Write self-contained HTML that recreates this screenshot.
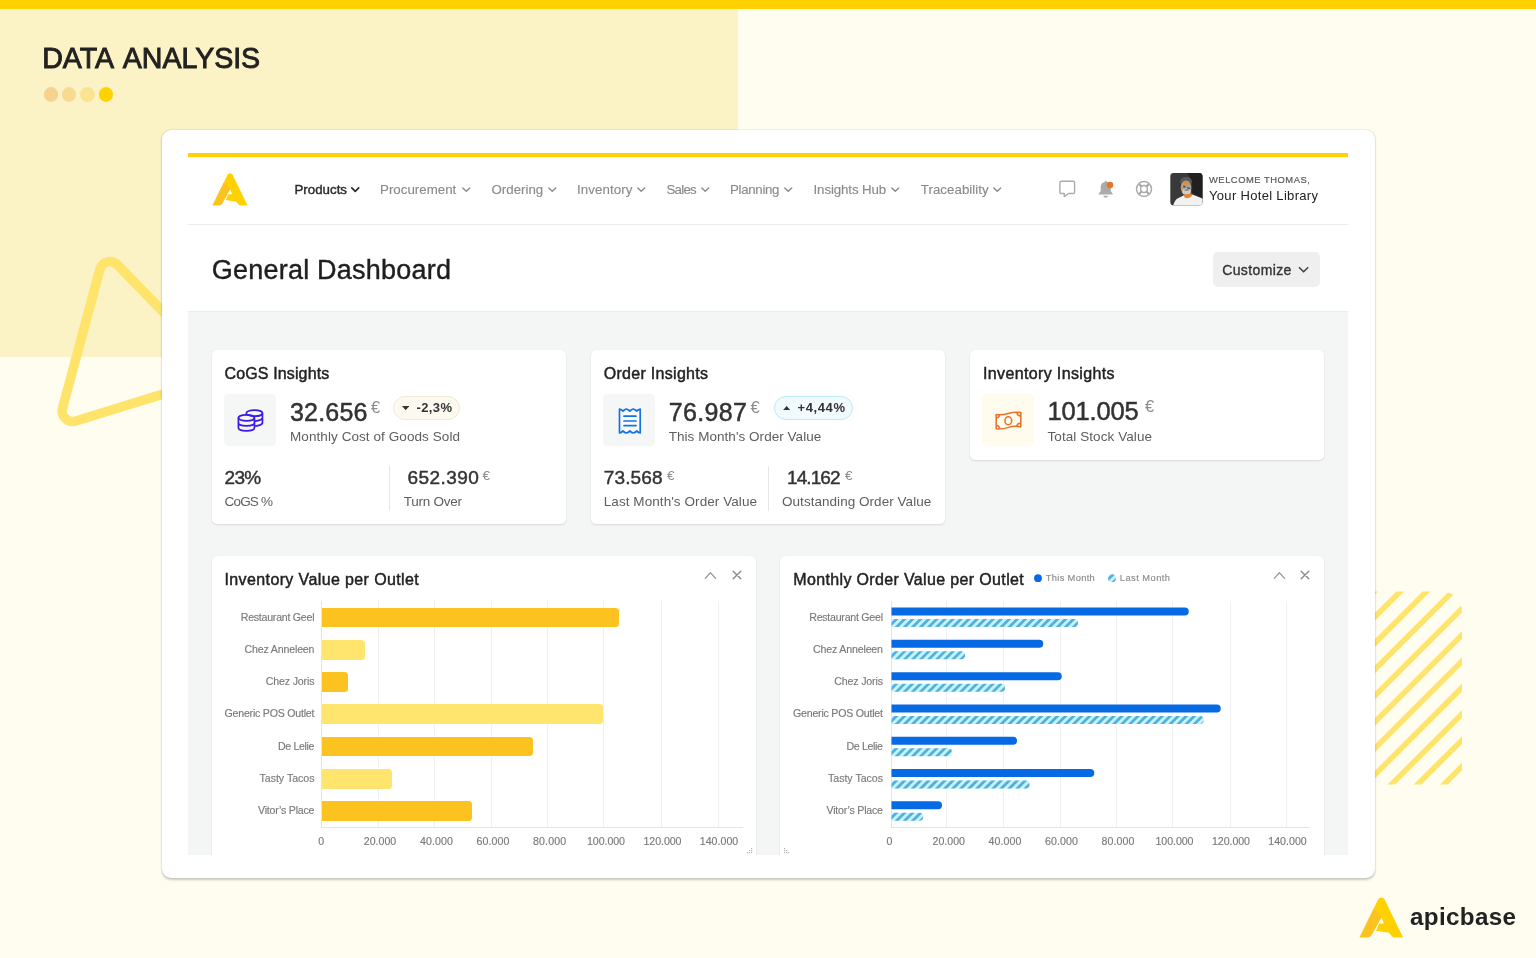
<!DOCTYPE html><html lang="en"><head><meta charset="utf-8"><title>Data Analysis – General Dashboard</title><style>
*{box-sizing:border-box;margin:0;padding:0}
html,body{width:1536px;height:958px;overflow:hidden}
h1,h2,h3{font-weight:inherit;font-size:inherit}
body{position:relative;background:#FFFDF0;font-family:"Liberation Sans",sans-serif;color:#333}
#root{position:absolute;left:0;top:0;width:1536px;height:958px;will-change:transform}
.abs,.t,svg.ic{position:absolute}
.t{white-space:nowrap;line-height:1;display:block}
.topbar{left:0;top:0;width:1536px;height:9px;background:#FFD100}
.leftpanel{left:0;top:9px;width:738px;height:348px;background:#FBF2C6}
.dot{width:14.4px;height:15px;border-radius:50%;top:86.8px}
.shell{left:162px;top:129.5px;width:1212.5px;height:748.5px;background:#fff;border-radius:9px;box-shadow:0 1.5px 2.5px rgba(0,0,0,.2),0 0 1.5px rgba(0,0,0,.2)}
.app{left:188px;top:153px;width:1160px;height:701.5px;overflow:hidden;background:#fff}
.app .abs,.app .t,.app svg.ic{position:absolute}
.yline{left:0;top:0.4px;width:1160px;height:3.7px;background:#FFD100}
.navline{left:0;top:70.9px;width:1160px;height:1.5px;background:#ECECEC}
.grey{left:0;top:157.5px;width:1160px;height:560px;background:#F4F5F5;border-top:1px solid #EBECEC}
.card{background:#fff;border-radius:5px;box-shadow:0 1px 2px rgba(0,0,0,.11),0 0 1px rgba(0,0,0,.07)}
.ibox{border-radius:4.5px;background:#F5F6F6}
.vdiv{width:1.5px;background:#E6E6E6}
.badge{height:23.5px;border-radius:12px;border:1px solid}
.btn{left:1213px;top:252px;width:107px;height:35px;border-radius:5px;background:#EFEFEF}
</style></head><body><div id="root"><div class="abs topbar"></div><div class="abs leftpanel"></div><svg class="ic" style="left:0;top:0" width="400" height="500" viewBox="0 0 400 500"><path d="M99.81 269.45 A10.50 10.50 0 0 1 117.48 264.85 L212.65 362.80 A10.50 10.50 0 0 1 208.21 380.15 L75.77 421.00 A10.50 10.50 0 0 1 62.53 408.24 Z" fill="none" stroke="#FFE46B" stroke-width="9.5"/></svg><svg class="ic" style="left:0;top:0" width="1536" height="958" viewBox="0 0 1536 958"><defs><clipPath id="sc"><path d="M1300 591.6H1442a20 20 0 0 1 20 20V784.4H1300Z"/></clipPath></defs><g clip-path="url(#sc)" stroke="#FFE46B" stroke-width="5.5"><line x1="1039.1" y1="900.0" x2="1439.1" y2="500.0"/><line x1="1065.4" y1="900.0" x2="1465.4" y2="500.0"/><line x1="1091.7" y1="900.0" x2="1491.7" y2="500.0"/><line x1="1118.0" y1="900.0" x2="1518.0" y2="500.0"/><line x1="1144.3" y1="900.0" x2="1544.3" y2="500.0"/><line x1="1170.6" y1="900.0" x2="1570.6" y2="500.0"/><line x1="1196.9" y1="900.0" x2="1596.9" y2="500.0"/><line x1="1223.2" y1="900.0" x2="1623.2" y2="500.0"/><line x1="1249.5" y1="900.0" x2="1649.5" y2="500.0"/><line x1="1275.8" y1="900.0" x2="1675.8" y2="500.0"/><line x1="1302.1" y1="900.0" x2="1702.1" y2="500.0"/><line x1="1328.4" y1="900.0" x2="1728.4" y2="500.0"/><line x1="1354.7" y1="900.0" x2="1754.7" y2="500.0"/><line x1="1381.0" y1="900.0" x2="1781.0" y2="500.0"/></g></svg><h1><span class="t" id="t0" style="left:42.20px;top:44px;font-size:28.6px;color:#222;-webkit-text-stroke:0.9px #222;letter-spacing:-0.046px;word-spacing:4px;">DATA ANALYSIS</span></h1><div class="abs dot" style="left:43.8px;background:#F5D28F"></div><div class="abs dot" style="left:62.05px;background:#F8DA93"></div><div class="abs dot" style="left:80.3px;background:#FBE491"></div><div class="abs dot" style="left:98.55px;background:#FFD200"></div><div class="abs shell"></div><div class="abs app"><div class="abs yline"></div><svg class="ic" style="left:24px;top:19.5px" width="36" height="33" viewBox="0 0 36 33"><path d="M11.9 9.2 15.5 1.85A2.85 2.85 0 0 1 20.6 1.85L35.6 32.6H27.6L24.1 28.8 13.8 27.1 16.3 21.3H20.1L18.1 16.1Z" fill="#FFD100"/><path d="M11.9 9.0 17.7 14.7 18.2 16.2 10.6 30.1Q9.3 32.6 7 32.6H0.3Z" fill="#FCC21F"/></svg><nav><span class="t" id="t1" style="left:106.50px;top:30px;font-size:13.3px;color:#2B2B2B;-webkit-text-stroke:0.42px #2B2B2B;">Products</span><svg class="ic" style="left:162.95px;top:34.3px" width="9" height="6" viewBox="0 0 9 6"><path d="M0.8 0.9 4.25 4.3 7.7 0.9" fill="none" stroke="#2B2B2B" stroke-width="1.7" stroke-linecap="round" stroke-linejoin="round"/></svg><span class="t" id="t2" style="left:192.00px;top:30px;font-size:13.3px;color:#8A8A8A;-webkit-text-stroke:0.12px #8A8A8A;letter-spacing:0.013px;">Procurement</span><svg class="ic" style="left:274.2px;top:34.3px" width="9" height="6" viewBox="0 0 9 6"><path d="M0.8 0.9 4.25 4.3 7.7 0.9" fill="none" stroke="#8A8A8A" stroke-width="1.4" stroke-linecap="round" stroke-linejoin="round"/></svg><span class="t" id="t3" style="left:303.50px;top:30px;font-size:13.3px;color:#8A8A8A;-webkit-text-stroke:0.12px #8A8A8A;">Ordering</span><svg class="ic" style="left:359.7px;top:34.3px" width="9" height="6" viewBox="0 0 9 6"><path d="M0.8 0.9 4.25 4.3 7.7 0.9" fill="none" stroke="#8A8A8A" stroke-width="1.4" stroke-linecap="round" stroke-linejoin="round"/></svg><span class="t" id="t4" style="left:389.00px;top:30px;font-size:13.3px;color:#8A8A8A;-webkit-text-stroke:0.12px #8A8A8A;letter-spacing:0.100px;">Inventory</span><svg class="ic" style="left:449.2px;top:34.3px" width="9" height="6" viewBox="0 0 9 6"><path d="M0.8 0.9 4.25 4.3 7.7 0.9" fill="none" stroke="#8A8A8A" stroke-width="1.4" stroke-linecap="round" stroke-linejoin="round"/></svg><span class="t" id="t5" style="left:478.50px;top:30px;font-size:13.3px;color:#8A8A8A;-webkit-text-stroke:0.12px #8A8A8A;letter-spacing:-0.754px;">Sales</span><svg class="ic" style="left:512.95px;top:34.3px" width="9" height="6" viewBox="0 0 9 6"><path d="M0.8 0.9 4.25 4.3 7.7 0.9" fill="none" stroke="#8A8A8A" stroke-width="1.4" stroke-linecap="round" stroke-linejoin="round"/></svg><span class="t" id="t6" style="left:542.00px;top:30px;font-size:13.3px;color:#8A8A8A;-webkit-text-stroke:0.12px #8A8A8A;letter-spacing:-0.324px;">Planning</span><svg class="ic" style="left:596.2px;top:34.3px" width="9" height="6" viewBox="0 0 9 6"><path d="M0.8 0.9 4.25 4.3 7.7 0.9" fill="none" stroke="#8A8A8A" stroke-width="1.4" stroke-linecap="round" stroke-linejoin="round"/></svg><span class="t" id="t7" style="left:625.50px;top:30px;font-size:13.3px;color:#8A8A8A;-webkit-text-stroke:0.12px #8A8A8A;letter-spacing:-0.107px;">Insights Hub</span><svg class="ic" style="left:703.45px;top:34.3px" width="9" height="6" viewBox="0 0 9 6"><path d="M0.8 0.9 4.25 4.3 7.7 0.9" fill="none" stroke="#8A8A8A" stroke-width="1.4" stroke-linecap="round" stroke-linejoin="round"/></svg><span class="t" id="t8" style="left:732.75px;top:30px;font-size:13.3px;color:#8A8A8A;-webkit-text-stroke:0.12px #8A8A8A;letter-spacing:0.045px;">Traceability</span><svg class="ic" style="left:805.45px;top:34.3px" width="9" height="6" viewBox="0 0 9 6"><path d="M0.8 0.9 4.25 4.3 7.7 0.9" fill="none" stroke="#8A8A8A" stroke-width="1.4" stroke-linecap="round" stroke-linejoin="round"/></svg></nav><div class="abs navline"></div><svg class="ic" style="left:871.1px;top:27.4px" width="18" height="18" viewBox="0 0 18 18"><path d="M2.2 1.3H14.3Q15.6 1.3 15.6 2.6V12.2Q15.6 13.5 14.3 13.5H9.6L5.3 16.6V13.5H2.2Q0.9 13.5 0.9 12.2V2.6Q0.9 1.3 2.2 1.3Z" fill="none" stroke="#ABABAB" stroke-width="1.4" stroke-linejoin="round"/></svg><svg class="ic" style="left:908.66px;top:27.03px" width="19.6" height="19.6" viewBox="0 0 18 18"><path d="M8 0.8Q9 0.8 9 1.8Q12.6 2.6 12.6 7V10.2L14.4 12.6V13.4H1.6V12.6L3.4 10.2V7Q3.4 2.6 7 1.8Q7 0.8 8 0.8Z" fill="#ABABAB"/><path d="M5.8 14.5H10.2Q9.7 16.2 8 16.2Q6.3 16.2 5.8 14.5Z" fill="#ABABAB"/><circle cx="11.9" cy="4.65" r="3.05" fill="#E8732C"/></svg><svg class="ic" style="left:947px;top:27.2px" width="18" height="18" viewBox="0 0 18 18"><g fill="none" stroke="#ABABAB" stroke-width="1.5"><circle cx="9" cy="9" r="7.5"/><circle cx="9" cy="9" r="3.4"/><path d="M3.7 3.7 6.6 6.6M14.3 3.7 11.4 6.6M3.7 14.3 6.6 11.4M14.3 14.3 11.4 11.4" stroke-width="2.2"/></g></svg><svg class="ic" style="left:981.8px;top:19.8px" width="33" height="33" viewBox="0 0 33 33"><defs><clipPath id="av"><rect x="0.3" y="0" width="32.2" height="32.4" rx="3.4"/></clipPath></defs><g clip-path="url(#av)"><rect width="33" height="33" fill="#393939"/><path d="M17 0H33V26L22 20Q24 8 17 0Z" fill="#202020"/><ellipse cx="16" cy="8.6" rx="5.9" ry="4.6" fill="#595959"/><ellipse cx="16" cy="14.6" rx="5.3" ry="7" fill="#A7A29C"/><path d="M14.2 8.6H19L19.4 11.6 16 11.2 14 11.6Z" fill="#E98A2F"/><path d="M11.6 13.2H13.6L14.4 16.8 12.2 16.4Z" fill="#E9963F"/><path d="M13.2 12.8H15.4V14.4H13.2ZM16.8 14.2 20.2 14.8 19.6 17 17 16.4Z" fill="#4A4A4A"/><ellipse cx="16.6" cy="18.7" rx="4.3" ry="3.2" fill="#CDCDCD"/><path d="M14.6 16.4H18.8V17.6H14.6Z" fill="#5A5A5A"/><path d="M3 33Q4.6 27 8 25.3L14 22.3Q18 26.6 22.2 21.4L32.6 25.4V33Z" fill="#F1F1F1"/><path d="M14.2 21.6 22 20.6 21.4 23.6Q18 26.4 14.4 24.4Z" fill="#E8842C"/></g></svg><span class="t" id="t9" style="left:1021.00px;top:22px;font-size:9.4px;color:#5A5A5A;-webkit-text-stroke:0.2px #5A5A5A;letter-spacing:0.515px;">WELCOME THOMAS,</span><span class="t" id="t10" style="left:1021.00px;top:36px;font-size:13px;color:#222;letter-spacing:0.319px;">Your Hotel Library</span><h2><span class="t" id="t11" style="left:23.80px;top:104px;font-size:27px;color:#1E1E1E;-webkit-text-stroke:0.4px #1E1E1E;letter-spacing:0.221px;">General Dashboard</span></h2><div class="abs" style="left:1025px;top:99px;width:107px;height:35px;border-radius:5px;background:#EFEFEF"></div><span class="t" id="t12" style="left:1034.20px;top:110px;font-size:14px;color:#333;-webkit-text-stroke:0.35px #333;letter-spacing:0.382px;">Customize</span><svg class="ic" style="left:1109.9px;top:113.2px" width="12" height="8" viewBox="0 0 12 8"><path d="M1.5 1.7 5.6 5.8 9.7 1.7" fill="none" stroke="#444" stroke-width="1.6" stroke-linecap="round" stroke-linejoin="round"/></svg><div class="abs grey"></div><section><div class="abs card" style="left:23.75px;top:196.5px;width:354.5px;height:174.25px;"></div><h3><span class="t" id="t13" style="left:36.50px;top:213px;font-size:16px;color:#222;-webkit-text-stroke:0.45px #222;letter-spacing:0.133px;">CoGS Insights</span></h3><div class="abs ibox" style="left:36.2px;top:241.3px;width:52.2px;height:52.2px;"></div><svg class="ic" style="left:49px;top:254.1px" width="28.3" height="24.5" viewBox="0 0 30 26"><g fill="none" stroke="#3C1AE6" stroke-width="1.85"><ellipse cx="18.4" cy="6.5" rx="8.6" ry="3.2"/><path d="M27 6.5V17.1Q26 19.6 19.2 20.3M27 11.8Q26 14.3 19 15M19 9.7"/><ellipse cx="10" cy="11.5" rx="8.5" ry="3.2"/><path d="M1.5 11.5V22.1Q1.5 25.3 10 25.3Q18.5 25.3 18.5 22.1V11.5M1.5 16.8Q1.5 20 10 20Q18.5 20 18.5 16.8"/></g></svg><span class="t" id="t14" style="left:102.00px;top:247px;font-size:25px;color:#333;-webkit-text-stroke:0.5px #333;letter-spacing:0.206px;">32.656</span><span class="t" id="t15" style="left:183.00px;top:246px;font-size:16.5px;color:#8C8C8C;letter-spacing:0.312px;">€</span><div class="abs badge" style="left:204.8px;top:243px;width:66.8px;height:23.5px;background:#FCFAF0;border-color:#F1E9D2"></div><svg class="ic" style="left:213.8px;top:252.8px" width="7.4" height="4.2" viewBox="0 0 7.4 4.2"><path d="M0 0H7.4L3.7 4.2Z" fill="#333"/></svg><span class="t" id="t16" style="left:228.40px;top:248px;font-size:13px;color:#333;font-weight:700;letter-spacing:0.408px;">-2,3%</span><span class="t" id="t17" style="left:102.00px;top:277px;font-size:13.5px;color:#5E5E5E;letter-spacing:0.076px;">Monthly Cost of Goods Sold</span><span class="t" id="t18" style="left:36.50px;top:315px;font-size:19px;color:#333;-webkit-text-stroke:0.45px #333;letter-spacing:-0.641px;">23%</span><span class="t" id="t19" style="left:36.50px;top:342px;font-size:13.5px;color:#5E5E5E;letter-spacing:-0.806px;">CoGS %</span><div class="abs vdiv" style="left:200.5px;top:313px;width:1.5px;height:44.5px;"></div><span class="t" id="t20" style="left:219.50px;top:315px;font-size:19px;color:#333;-webkit-text-stroke:0.45px #333;letter-spacing:0.427px;">652.390</span><span class="t" id="t21" style="left:294.50px;top:316px;font-size:13.5px;color:#8C8C8C;letter-spacing:-0.016px;">€</span><span class="t" id="t22" style="left:215.75px;top:342px;font-size:13.5px;color:#5E5E5E;letter-spacing:-0.252px;">Turn Over</span></section><section><div class="abs card" style="left:402.5px;top:196.5px;width:354.5px;height:174.25px;"></div><h3><span class="t" id="t23" style="left:415.75px;top:213px;font-size:16px;color:#222;-webkit-text-stroke:0.45px #222;letter-spacing:0.290px;">Order Insights</span></h3><div class="abs ibox" style="left:415.2px;top:241.3px;width:52.2px;height:52.2px;"></div><svg class="ic" style="left:429.75px;top:253.9px" width="24" height="28" viewBox="0 0 24 28"><g fill="none" stroke="#1273E6" stroke-width="1.7" stroke-linejoin="round" stroke-linecap="round"><path d="M1.5 2Q3.2 2.4 4.95 4 6.7 2.4 8.4 2 10.1 2.4 11.85 4 13.6 2.4 15.3 2 17 2.4 18.75 4 20.5 2.4 22.2 2V26Q20.5 25.6 18.75 24 17 25.6 15.3 26 13.6 25.6 11.85 24 10.1 25.6 8.4 26 6.7 25.6 4.95 24 3.2 25.6 1.5 26Z" fill="#FAFBFB"/><path d="M6 9.2H18M6 14H18M6 18.7H18"/></g></svg><span class="t" id="t24" style="left:480.75px;top:247px;font-size:25px;color:#333;-webkit-text-stroke:0.5px #333;letter-spacing:0.356px;">76.987</span><span class="t" id="t25" style="left:562.50px;top:246px;font-size:16.5px;color:#8C8C8C;letter-spacing:0.312px;">€</span><div class="abs badge" style="left:585.75px;top:243px;width:78.75px;height:23.5px;background:#F1FAFD;border-color:#BFE9F6"></div><svg class="ic" style="left:594.5px;top:252.8px" width="7.4" height="4.2" viewBox="0 0 7.4 4.2"><path d="M0 4.2 3.7 0 7.4 4.2Z" fill="#333"/></svg><span class="t" id="t26" style="left:609.50px;top:248px;font-size:13px;color:#333;font-weight:700;letter-spacing:0.609px;">+4,44%</span><span class="t" id="t27" style="left:480.75px;top:277px;font-size:13.5px;color:#5E5E5E;letter-spacing:0.037px;">This Month's Order Value</span><span class="t" id="t28" style="left:415.75px;top:315px;font-size:19px;color:#333;-webkit-text-stroke:0.45px #333;letter-spacing:0.125px;">73.568</span><span class="t" id="t29" style="left:479.00px;top:316px;font-size:13.5px;color:#8C8C8C;letter-spacing:-0.016px;">€</span><span class="t" id="t30" style="left:415.75px;top:342px;font-size:13.5px;color:#5E5E5E;letter-spacing:0.069px;">Last Month's Order Value</span><div class="abs vdiv" style="left:579.5px;top:313px;width:1.5px;height:44.5px;"></div><span class="t" id="t31" style="left:599.00px;top:315px;font-size:19px;color:#333;-webkit-text-stroke:0.45px #333;letter-spacing:-0.925px;">14.162</span><span class="t" id="t32" style="left:657.00px;top:316px;font-size:13.5px;color:#8C8C8C;letter-spacing:-0.016px;">€</span><span class="t" id="t33" style="left:594.00px;top:342px;font-size:13.5px;color:#5E5E5E;letter-spacing:0.041px;">Outstanding Order Value</span></section><section><div class="abs card" style="left:781.5px;top:196.5px;width:354.75px;height:110px;"></div><h3><span class="t" id="t34" style="left:795.00px;top:213px;font-size:16px;color:#222;-webkit-text-stroke:0.45px #222;letter-spacing:0.358px;">Inventory Insights</span></h3><div class="abs ibox" style="left:794.2px;top:241.3px;width:52.2px;height:52.2px;background:#FFFCEE"></div><svg class="ic" style="left:807.1px;top:257.9px" width="27.2" height="19.4" viewBox="0 0 28 20"><g fill="none" stroke="#E8732C" stroke-width="1.6" stroke-linejoin="round"><path d="M1.2 3.6Q7 4.6 13.6 2.6T26.6 1.6V16.4Q20.5 14.8 14 16.9T1.2 18.4Z"/><ellipse cx="13.7" cy="10.1" rx="3.5" ry="4.1"/><path d="M1.2 7.2Q4.4 7 4.6 3.9M26.6 5.2Q23.2 5.4 22.6 2M1.2 14.8Q4 15 4.8 18M26.6 12.6Q23.2 12.4 22.4 15.6"/></g></svg><span class="t" id="t35" style="left:859.50px;top:246px;font-size:25.5px;color:#333;-webkit-text-stroke:0.5px #333;letter-spacing:-0.156px;">101.005</span><span class="t" id="t36" style="left:957.00px;top:245px;font-size:16.5px;color:#8C8C8C;letter-spacing:-0.188px;">€</span><span class="t" id="t37" style="left:859.50px;top:277px;font-size:13.5px;color:#5E5E5E;letter-spacing:0.074px;">Total Stock Value</span></section><section><div class="abs card" style="left:23.75px;top:402.5px;width:544px;height:320px;"></div><h3><span class="t" id="t38" style="left:36.50px;top:419px;font-size:16px;color:#222;-webkit-text-stroke:0.45px #222;letter-spacing:0.382px;">Inventory Value per Outlet</span></h3><svg class="ic" style="left:516.4px;top:418.2px" width="13" height="9" viewBox="0 0 13 9"><path d="M1.2 7.4 6.4 1.8 11.6 7.4" fill="none" stroke="#9A9A9A" stroke-width="1.3" stroke-linecap="round" stroke-linejoin="round"/></svg><svg class="ic" style="left:543.8px;top:417.4px" width="10" height="10" viewBox="0 0 10 10"><path d="M1.2 1.2 8.8 8.8M8.8 1.2 1.2 8.8" fill="none" stroke="#8A8A8A" stroke-width="1.4" stroke-linecap="round"/></svg><div class="abs" style="left:189.75px;top:448px;width:1px;height:226.5px;background:#F0F0F0"></div><div class="abs" style="left:246px;top:448px;width:1px;height:226.5px;background:#F0F0F0"></div><div class="abs" style="left:302.75px;top:448px;width:1px;height:226.5px;background:#F0F0F0"></div><div class="abs" style="left:359px;top:448px;width:1px;height:226.5px;background:#F0F0F0"></div><div class="abs" style="left:415.25px;top:448px;width:1px;height:226.5px;background:#F0F0F0"></div><div class="abs" style="left:473.25px;top:448px;width:1px;height:226.5px;background:#F0F0F0"></div><div class="abs" style="left:529.75px;top:448px;width:1px;height:226.5px;background:#F0F0F0"></div><div class="abs" style="left:133.15px;top:448px;width:1.3px;height:227px;background:#E4E4E4"></div><div class="abs" style="left:133.15px;top:674px;width:421.85px;height:1.4px;background:#E4E4E4"></div><span class="t" id="t39" style="left:52.75px;top:459px;font-size:10.6px;color:#7A7A7A;-webkit-text-stroke:0.15px #7A7A7A;letter-spacing:-0.243px;">Restaurant Geel</span><span class="t" id="t40" style="left:56.50px;top:491px;font-size:10.6px;color:#7A7A7A;-webkit-text-stroke:0.15px #7A7A7A;letter-spacing:-0.155px;">Chez Anneleen</span><span class="t" id="t41" style="left:77.75px;top:523px;font-size:10.6px;color:#7A7A7A;-webkit-text-stroke:0.15px #7A7A7A;letter-spacing:-0.144px;">Chez Joris</span><span class="t" id="t42" style="left:36.50px;top:555px;font-size:10.6px;color:#7A7A7A;-webkit-text-stroke:0.15px #7A7A7A;letter-spacing:-0.213px;">Generic POS Outlet</span><span class="t" id="t43" style="left:90.00px;top:588px;font-size:10.6px;color:#7A7A7A;-webkit-text-stroke:0.15px #7A7A7A;letter-spacing:-0.339px;">De Lelie</span><span class="t" id="t44" style="left:71.50px;top:620px;font-size:10.6px;color:#7A7A7A;-webkit-text-stroke:0.15px #7A7A7A;letter-spacing:-0.016px;">Tasty Tacos</span><span class="t" id="t45" style="left:70.00px;top:652px;font-size:10.6px;color:#7A7A7A;-webkit-text-stroke:0.15px #7A7A7A;letter-spacing:-0.199px;">Vitor’s Place</span><span class="t" id="t46" style="left:130.25px;top:683px;font-size:10.6px;color:#7A7A7A;-webkit-text-stroke:0.15px #7A7A7A;letter-spacing:0.094px;">0</span><span class="t" id="t47" style="left:175.75px;top:683px;font-size:10.6px;color:#7A7A7A;-webkit-text-stroke:0.15px #7A7A7A;letter-spacing:0.019px;">20.000</span><span class="t" id="t48" style="left:232.00px;top:683px;font-size:10.6px;color:#7A7A7A;-webkit-text-stroke:0.15px #7A7A7A;letter-spacing:0.119px;">40.000</span><span class="t" id="t49" style="left:288.50px;top:683px;font-size:10.6px;color:#7A7A7A;-webkit-text-stroke:0.15px #7A7A7A;letter-spacing:0.119px;">60.000</span><span class="t" id="t50" style="left:345.10px;top:683px;font-size:10.6px;color:#7A7A7A;-webkit-text-stroke:0.15px #7A7A7A;letter-spacing:0.119px;">80.000</span><span class="t" id="t51" style="left:399.00px;top:683px;font-size:10.6px;color:#7A7A7A;-webkit-text-stroke:0.15px #7A7A7A;letter-spacing:-0.049px;">100.000</span><span class="t" id="t52" style="left:455.50px;top:683px;font-size:10.6px;color:#7A7A7A;-webkit-text-stroke:0.15px #7A7A7A;letter-spacing:-0.049px;">120.000</span><span class="t" id="t53" style="left:511.75px;top:683px;font-size:10.6px;color:#7A7A7A;-webkit-text-stroke:0.15px #7A7A7A;letter-spacing:0.034px;">140.000</span><div class="abs" style="left:134.4px;top:454.5px;width:297.1px;height:19.5px;border-radius:0 3.5px 3.5px 0;background:#FCC21F"></div><div class="abs" style="left:134.4px;top:487px;width:42.6px;height:19.5px;border-radius:0 3.5px 3.5px 0;background:#FFE46E"></div><div class="abs" style="left:134.4px;top:519px;width:25.6px;height:19.5px;border-radius:0 3.5px 3.5px 0;background:#FCC21F"></div><div class="abs" style="left:134.4px;top:551.25px;width:280.85px;height:19.5px;border-radius:0 3.5px 3.5px 0;background:#FFE46E"></div><div class="abs" style="left:134.4px;top:583.75px;width:210.85px;height:19.5px;border-radius:0 3.5px 3.5px 0;background:#FCC21F"></div><div class="abs" style="left:134.4px;top:616px;width:69.6px;height:19.5px;border-radius:0 3.5px 3.5px 0;background:#FFE46E"></div><div class="abs" style="left:134.4px;top:648.25px;width:149.6px;height:19.5px;border-radius:0 3.5px 3.5px 0;background:#FCC21F"></div><svg class="ic" style="left:559px;top:695.3px" width="6" height="6" viewBox="0 0 6 6"><g fill="#B5B5B5"><rect x="4" y="0" width="1.2" height="1.2"/><rect x="2" y="2" width="1.2" height="1.2"/><rect x="4" y="2" width="1.2" height="1.2"/><rect x="0" y="4" width="1.2" height="1.2"/><rect x="2" y="4" width="1.2" height="1.2"/><rect x="4" y="4" width="1.2" height="1.2"/></g></svg></section><section><div class="abs card" style="left:592px;top:402.5px;width:544.25px;height:320px;"></div><h3><span class="t" id="t54" style="left:605.25px;top:419px;font-size:16px;color:#222;-webkit-text-stroke:0.45px #222;letter-spacing:0.353px;">Monthly Order Value per Outlet</span></h3><svg class="ic" style="left:0;top:0" width="1160" height="702" viewBox="188 153 1160 702"><defs><clipPath id="lm"><path d="M1108.1 578.2a3.9 3.9 0 1 0 7.8 0a3.9 3.9 0 1 0 -7.8 0Z"/><path d="M891.5 619.10H1074.00a4 4 0 0 1 0 8H891.5Z"/><path d="M891.5 651.37H961.00a4 4 0 0 1 0 8H891.5Z"/><path d="M891.5 683.64H1001.00a4 4 0 0 1 0 8H891.5Z"/><path d="M891.5 715.91H1199.75a4 4 0 0 1 0 8H891.5Z"/><path d="M891.5 748.18H948.00a4 4 0 0 1 0 8H891.5Z"/><path d="M891.5 780.45H1025.50a4 4 0 0 1 0 8H891.5Z"/><path d="M891.5 812.72H919.25a4 4 0 0 1 0 8H891.5Z"/></clipPath></defs><circle cx="1038" cy="578.2" r="3.9" fill="#066AE5"/></svg><span class="t" id="t55" style="left:857.75px;top:421px;font-size:9.3px;color:#8C8C8C;-webkit-text-stroke:0.15px #8C8C8C;letter-spacing:0.339px;">This Month</span><span class="t" id="t56" style="left:931.80px;top:421px;font-size:9.3px;color:#8C8C8C;-webkit-text-stroke:0.15px #8C8C8C;letter-spacing:0.467px;">Last Month</span><svg class="ic" style="left:1084.65px;top:418.2px" width="13" height="9" viewBox="0 0 13 9"><path d="M1.2 7.4 6.4 1.8 11.6 7.4" fill="none" stroke="#9A9A9A" stroke-width="1.3" stroke-linecap="round" stroke-linejoin="round"/></svg><svg class="ic" style="left:1112.05px;top:417.4px" width="10" height="10" viewBox="0 0 10 10"><path d="M1.2 1.2 8.8 8.8M8.8 1.2 1.2 8.8" fill="none" stroke="#8A8A8A" stroke-width="1.4" stroke-linecap="round"/></svg><div class="abs" style="left:758.25px;top:448px;width:1px;height:226.5px;background:#F0F0F0"></div><div class="abs" style="left:815.25px;top:448px;width:1px;height:226.5px;background:#F0F0F0"></div><div class="abs" style="left:871.5px;top:448px;width:1px;height:226.5px;background:#F0F0F0"></div><div class="abs" style="left:927.75px;top:448px;width:1px;height:226.5px;background:#F0F0F0"></div><div class="abs" style="left:984px;top:448px;width:1px;height:226.5px;background:#F0F0F0"></div><div class="abs" style="left:1042px;top:448px;width:1px;height:226.5px;background:#F0F0F0"></div><div class="abs" style="left:1098.25px;top:448px;width:1px;height:226.5px;background:#F0F0F0"></div><div class="abs" style="left:702.65px;top:448px;width:1.3px;height:227px;background:#E4E4E4"></div><div class="abs" style="left:702.65px;top:674px;width:419.35px;height:1.4px;background:#E4E4E4"></div><span class="t" id="t57" style="left:621.25px;top:459px;font-size:10.6px;color:#7A7A7A;-webkit-text-stroke:0.15px #7A7A7A;letter-spacing:-0.243px;">Restaurant Geel</span><span class="t" id="t58" style="left:625.00px;top:491px;font-size:10.6px;color:#7A7A7A;-webkit-text-stroke:0.15px #7A7A7A;letter-spacing:-0.155px;">Chez Anneleen</span><span class="t" id="t59" style="left:646.25px;top:523px;font-size:10.6px;color:#7A7A7A;-webkit-text-stroke:0.15px #7A7A7A;letter-spacing:-0.144px;">Chez Joris</span><span class="t" id="t60" style="left:605.00px;top:555px;font-size:10.6px;color:#7A7A7A;-webkit-text-stroke:0.15px #7A7A7A;letter-spacing:-0.213px;">Generic POS Outlet</span><span class="t" id="t61" style="left:658.50px;top:588px;font-size:10.6px;color:#7A7A7A;-webkit-text-stroke:0.15px #7A7A7A;letter-spacing:-0.339px;">De Lelie</span><span class="t" id="t62" style="left:640.00px;top:620px;font-size:10.6px;color:#7A7A7A;-webkit-text-stroke:0.15px #7A7A7A;letter-spacing:-0.016px;">Tasty Tacos</span><span class="t" id="t63" style="left:638.50px;top:652px;font-size:10.6px;color:#7A7A7A;-webkit-text-stroke:0.15px #7A7A7A;letter-spacing:-0.199px;">Vitor’s Place</span><span class="t" id="t64" style="left:698.50px;top:683px;font-size:10.6px;color:#7A7A7A;-webkit-text-stroke:0.15px #7A7A7A;letter-spacing:0.094px;">0</span><span class="t" id="t65" style="left:744.50px;top:683px;font-size:10.6px;color:#7A7A7A;-webkit-text-stroke:0.15px #7A7A7A;letter-spacing:0.019px;">20.000</span><span class="t" id="t66" style="left:800.50px;top:683px;font-size:10.6px;color:#7A7A7A;-webkit-text-stroke:0.15px #7A7A7A;letter-spacing:0.119px;">40.000</span><span class="t" id="t67" style="left:857.00px;top:683px;font-size:10.6px;color:#7A7A7A;-webkit-text-stroke:0.15px #7A7A7A;letter-spacing:0.119px;">60.000</span><span class="t" id="t68" style="left:913.50px;top:683px;font-size:10.6px;color:#7A7A7A;-webkit-text-stroke:0.15px #7A7A7A;letter-spacing:0.119px;">80.000</span><span class="t" id="t69" style="left:967.50px;top:683px;font-size:10.6px;color:#7A7A7A;-webkit-text-stroke:0.15px #7A7A7A;letter-spacing:-0.049px;">100.000</span><span class="t" id="t70" style="left:1024.00px;top:683px;font-size:10.6px;color:#7A7A7A;-webkit-text-stroke:0.15px #7A7A7A;letter-spacing:-0.049px;">120.000</span><span class="t" id="t71" style="left:1080.25px;top:683px;font-size:10.6px;color:#7A7A7A;-webkit-text-stroke:0.15px #7A7A7A;letter-spacing:0.034px;">140.000</span><svg class="ic" style="left:0;top:0;pointer-events:none" width="1160" height="702" viewBox="188 153 1160 702"><g fill="#066AE5"><path d="M891.5 607.60H1184.75a4 4 0 0 1 0 8H891.5Z"/><path d="M891.5 639.87H1039.25a4 4 0 0 1 0 8H891.5Z"/><path d="M891.5 672.14H1057.75a4 4 0 0 1 0 8H891.5Z"/><path d="M891.5 704.41H1216.75a4 4 0 0 1 0 8H891.5Z"/><path d="M891.5 736.68H1013.00a4 4 0 0 1 0 8H891.5Z"/><path d="M891.5 768.95H1090.25a4 4 0 0 1 0 8H891.5Z"/><path d="M891.5 801.22H938.00a4 4 0 0 1 0 8H891.5Z"/></g><g clip-path="url(#lm)"><rect x="880" y="570" width="350" height="260" fill="#C6F3FA"/><path d="M897.56 618.10L887.56 628.10M905.61 618.10L895.61 628.10M913.66 618.10L903.66 628.10M921.71 618.10L911.71 628.10M929.76 618.10L919.76 628.10M937.81 618.10L927.81 628.10M945.86 618.10L935.86 628.10M953.91 618.10L943.91 628.10M961.96 618.10L951.96 628.10M970.01 618.10L960.01 628.10M978.06 618.10L968.06 628.10M986.11 618.10L976.11 628.10M994.16 618.10L984.16 628.10M1002.21 618.10L992.21 628.10M1010.26 618.10L1000.26 628.10M1018.31 618.10L1008.31 628.10M1026.36 618.10L1016.36 628.10M1034.41 618.10L1024.41 628.10M1042.46 618.10L1032.46 628.10M1050.51 618.10L1040.51 628.10M1058.56 618.10L1048.56 628.10M1066.61 618.10L1056.61 628.10M1074.66 618.10L1064.66 628.10M1082.71 618.10L1072.71 628.10M897.56 650.37L887.56 660.37M905.61 650.37L895.61 660.37M913.66 650.37L903.66 660.37M921.71 650.37L911.71 660.37M929.76 650.37L919.76 660.37M937.81 650.37L927.81 660.37M945.86 650.37L935.86 660.37M953.91 650.37L943.91 660.37M961.96 650.37L951.96 660.37M970.01 650.37L960.01 660.37M897.56 682.64L887.56 692.64M905.61 682.64L895.61 692.64M913.66 682.64L903.66 692.64M921.71 682.64L911.71 692.64M929.76 682.64L919.76 692.64M937.81 682.64L927.81 692.64M945.86 682.64L935.86 692.64M953.91 682.64L943.91 692.64M961.96 682.64L951.96 692.64M970.01 682.64L960.01 692.64M978.06 682.64L968.06 692.64M986.11 682.64L976.11 692.64M994.16 682.64L984.16 692.64M1002.21 682.64L992.21 692.64M1010.26 682.64L1000.26 692.64M897.56 714.91L887.56 724.91M905.61 714.91L895.61 724.91M913.66 714.91L903.66 724.91M921.71 714.91L911.71 724.91M929.76 714.91L919.76 724.91M937.81 714.91L927.81 724.91M945.86 714.91L935.86 724.91M953.91 714.91L943.91 724.91M961.96 714.91L951.96 724.91M970.01 714.91L960.01 724.91M978.06 714.91L968.06 724.91M986.11 714.91L976.11 724.91M994.16 714.91L984.16 724.91M1002.21 714.91L992.21 724.91M1010.26 714.91L1000.26 724.91M1018.31 714.91L1008.31 724.91M1026.36 714.91L1016.36 724.91M1034.41 714.91L1024.41 724.91M1042.46 714.91L1032.46 724.91M1050.51 714.91L1040.51 724.91M1058.56 714.91L1048.56 724.91M1066.61 714.91L1056.61 724.91M1074.66 714.91L1064.66 724.91M1082.71 714.91L1072.71 724.91M1090.76 714.91L1080.76 724.91M1098.81 714.91L1088.81 724.91M1106.86 714.91L1096.86 724.91M1114.91 714.91L1104.91 724.91M1122.96 714.91L1112.96 724.91M1131.01 714.91L1121.01 724.91M1139.06 714.91L1129.06 724.91M1147.11 714.91L1137.11 724.91M1155.16 714.91L1145.16 724.91M1163.21 714.91L1153.21 724.91M1171.26 714.91L1161.26 724.91M1179.31 714.91L1169.31 724.91M1187.36 714.91L1177.36 724.91M1195.41 714.91L1185.41 724.91M1203.46 714.91L1193.46 724.91M1211.51 714.91L1201.51 724.91M897.56 747.18L887.56 757.18M905.61 747.18L895.61 757.18M913.66 747.18L903.66 757.18M921.71 747.18L911.71 757.18M929.76 747.18L919.76 757.18M937.81 747.18L927.81 757.18M945.86 747.18L935.86 757.18M953.91 747.18L943.91 757.18M961.96 747.18L951.96 757.18M897.56 779.45L887.56 789.45M905.61 779.45L895.61 789.45M913.66 779.45L903.66 789.45M921.71 779.45L911.71 789.45M929.76 779.45L919.76 789.45M937.81 779.45L927.81 789.45M945.86 779.45L935.86 789.45M953.91 779.45L943.91 789.45M961.96 779.45L951.96 789.45M970.01 779.45L960.01 789.45M978.06 779.45L968.06 789.45M986.11 779.45L976.11 789.45M994.16 779.45L984.16 789.45M1002.21 779.45L992.21 789.45M1010.26 779.45L1000.26 789.45M1018.31 779.45L1008.31 789.45M1026.36 779.45L1016.36 789.45M1034.41 779.45L1024.41 789.45M897.56 811.72L887.56 821.72M905.61 811.72L895.61 821.72M913.66 811.72L903.66 821.72M921.71 811.72L911.71 821.72M929.76 811.72L919.76 821.72M1114.30 573.30L1104.50 583.10M1122.35 573.30L1112.55 583.10" stroke="#50B0DE" stroke-width="2.76" fill="none"/></g></svg><svg class="ic" style="left:595.5px;top:695.3px" width="6" height="6" viewBox="0 0 6 6"><g fill="#B5B5B5"><rect x="0" y="0" width="1.2" height="1.2"/><rect x="0" y="2" width="1.2" height="1.2"/><rect x="2" y="2" width="1.2" height="1.2"/><rect x="0" y="4" width="1.2" height="1.2"/><rect x="2" y="4" width="1.2" height="1.2"/><rect x="4" y="4" width="1.2" height="1.2"/></g></svg></section></div><svg class="ic" style="left:1359.3px;top:897.3px" width="44.6" height="41" viewBox="0 0 36 33"><path d="M11.9 9.2 15.5 1.85A2.85 2.85 0 0 1 20.6 1.85L35.6 32.6H27.6L24.1 28.8 13.8 27.1 16.3 21.3H20.1L18.1 16.1Z" fill="#FFD100"/><path d="M11.9 9.0 17.7 14.7 18.2 16.2 10.6 30.1Q9.3 32.6 7 32.6H0.3Z" fill="#FCC21F"/></svg><span class="t" id="t72" style="left:1410.00px;top:905px;font-size:24.2px;color:#222;font-weight:700;letter-spacing:0.353px;">apicbase</span></div></body></html>
